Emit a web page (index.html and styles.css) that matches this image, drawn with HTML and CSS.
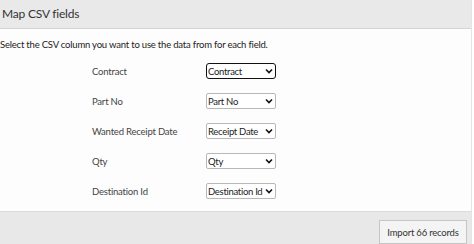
FILE: index.html
```html
<!DOCTYPE html>
<html lang="en">
<head>
    <meta charset="UTF-8">
    <title>Map CSV fields</title>
    <link rel="stylesheet" href="styles.css">
</head>
<body>
<div class="dialog">
    <div class="header">Map CSV fields</div>
    <div class="content">
        <p class="intro">Select the CSV column you want to use the data from for each field.</p>
        <div class="fields">
            <label>Contract</label>
            <select class="focus"><option>Contract</option></select>
            <label>Part No</label>
            <select><option>Part No</option></select>
            <label>Wanted Receipt Date</label>
            <select><option>Receipt Date</option></select>
            <label>Qty</label>
            <select><option>Qty</option></select>
            <label>Destination Id</label>
            <select><option>Destination Id</option></select>
        </div>
    </div>
    <div class="footer">
        <button class="import">Import 66 records</button>
    </div>
</div>
</body>
</html>
```

FILE: styles.css
```css
*{
    margin:0;
    padding:0;
    box-sizing:border-box;
}
html,body{
    width:100%;
    height:100%;
    overflow:hidden;
    background:#fff;
}
body{
    font-family:Lato,"Noto Sans",sans-serif;
    color:#333;
    letter-spacing:-0.2px;
}
.dialog{
    width:472px;
    height:244px;
    display:flex;
    flex-direction:column;
    border-right:1px solid #e4e4e4;
}
.header{
    flex-shrink:0;
    height:29px;
    padding:6px 0 0 2px;
    font-size:12px;
    color:#333;
    background:#e9e9ea;
    border-bottom:1px solid #d4d4d4;
}
.content{
    flex-shrink:0;
    height:182px;
    background:#fdfdfd;
}
.intro{
    font-size:9.5px;
    padding-top:10px;
    color:#222;
}
.fields{
    display:grid;
    grid-template-columns:114px 70px;
    grid-auto-rows:30px;
    align-items:center;
    margin:6px 0 0 92px;
    font-size:9.5px;
    color:#444;
}
.fields select{
    -webkit-appearance:none;
    appearance:none;
    width:70px;
    height:16px;
    font-family:inherit;
    font-size:9.5px;
    letter-spacing:-0.3px;
    color:#222;
    padding:0 0 0 1px;
    border:1px solid #b8b8b8;
    border-radius:2px;
    background:#fff url("data:image/svg+xml;utf8,<svg xmlns='http://www.w3.org/2000/svg' width='8' height='6'><path d='M1 1.5 L4 4.5 L7 1.5' fill='none' stroke='%23111' stroke-width='1.6'/></svg>") no-repeat right 2px center;
}
.fields select.focus{
    border:1px solid #111;
    border-radius:3px;
}
.footer{
    flex-shrink:0;
    height:33px;
    background:#e8e8e9;
    border-top:1px solid #dcdcdc;
    display:flex;
    justify-content:flex-end;
    align-items:flex-start;
    padding:8px 4px 0 0;
}
.import{
    width:88px;
    height:24px;
    font-family:inherit;
    font-size:9.5px;
    letter-spacing:-0.2px;
    color:#333;
    background:#f4f4f4;
    border:1px solid #c6c6c6;
}
```
